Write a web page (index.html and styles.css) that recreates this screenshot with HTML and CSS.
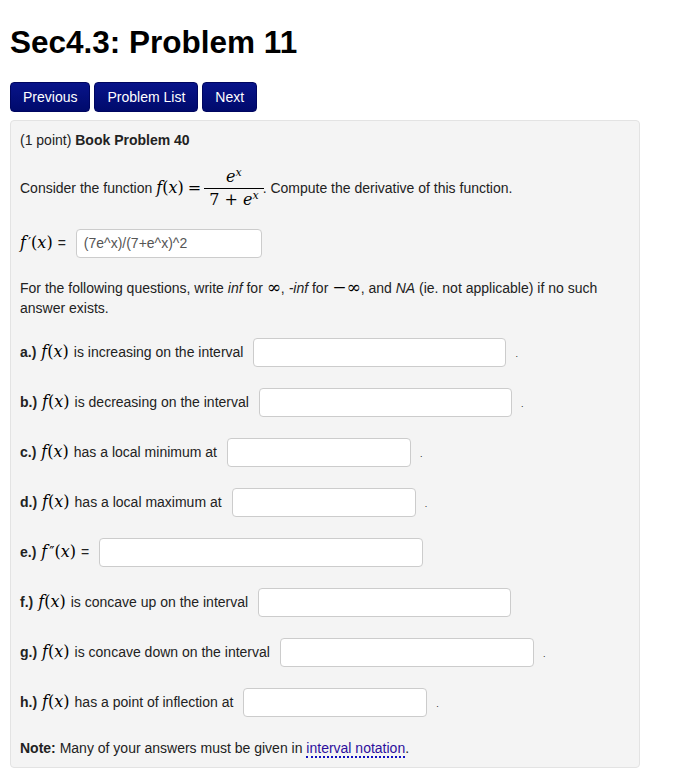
FILE: index.html
```html
<!DOCTYPE html>
<html>
<head>
<meta charset="utf-8">
<link rel="stylesheet" href="styles.css">
</head>
<body>
<h1 class="title">Sec4.3: Problem 11</h1>
<div class="nav">
  <span class="btn">Previous</span>
  <span class="btn">Problem List</span>
  <span class="btn">Next</span>
</div>
<div class="problem">
  <div class="line">(1 point) <b>Book Problem 40</b></div>
  <div class="frac-line">
    <span>Consider the function</span>
    <span class="math fx"><i>f</i>(<i>x</i>)</span>
    <span class="math eq">=</span>
    <span class="frac">
      <span class="num"><i>e</i><sup><i>x</i></sup></span>
      <span class="den">7 + <i>e</i><sup><i>x</i></sup></span>
    </span>
    <span class="after">. Compute the derivative of this function.</span>
  </div>
  <div class="row first-row">
    <span class="math"><i>f</i><span class="prime">′</span>(<i>x</i>)</span><span class="eqs">=</span>
    <span class="input w185 filled">(7e^x)/(7+e^x)^2</span>
  </div>
  <p class="para">For the following questions, write <i>inf</i> for <span class="math inf">∞</span>, <i>-inf</i> for <span class="math inf">−∞</span>, and <i>NA</i> (ie. not applicable) if no such answer exists.</p>
  <div class="row qa">
    <b>a.)</b><span class="math"><i>f</i>(<i>x</i>)</span><span>is increasing on the interval</span><span class="input w253"></span><span class="dot">.</span>
  </div>
  <div class="row q">
    <b>b.)</b><span class="math"><i>f</i>(<i>x</i>)</span><span>is decreasing on the interval</span><span class="input w253"></span><span class="dot">.</span>
  </div>
  <div class="row q">
    <b>c.)</b><span class="math"><i>f</i>(<i>x</i>)</span><span>has a local minimum at</span><span class="input w184"></span><span class="dot">.</span>
  </div>
  <div class="row q">
    <b>d.)</b><span class="math"><i>f</i>(<i>x</i>)</span><span>has a local maximum at</span><span class="input w184"></span><span class="dot">.</span>
  </div>
  <div class="row q">
    <b>e.)</b><span class="math"><i>f</i><span class="prime">″</span>(<i>x</i>)</span><span class="eqs">=</span><span class="input w324"></span>
  </div>
  <div class="row q">
    <b>f.)</b><span class="math"><i>f</i>(<i>x</i>)</span><span>is concave up on the interval</span><span class="input w253"></span>
  </div>
  <div class="row q">
    <b>g.)</b><span class="math"><i>f</i>(<i>x</i>)</span><span>is concave down on the interval</span><span class="input w254"></span><span class="dot">.</span>
  </div>
  <div class="row q">
    <b>h.)</b><span class="math"><i>f</i>(<i>x</i>)</span><span>has a point of inflection at</span><span class="input w184"></span><span class="dot">.</span>
  </div>
  <div class="line note"><b>Note:</b> Many of your answers must be given in <span class="link">interval notation</span>.</div>
</div>
</body>
</html>
```
FILE: styles.css
```css
html, body {
  margin: 0;
  padding: 0;
  background: #ffffff;
}
body {
  padding: 0 10px;
  font-family: "Liberation Sans", Arial, sans-serif;
  font-size: 14px;
  color: #222;
}
.title {
  margin: 0;
  padding-top: 24px;
  font-size: 31.5px;
  line-height: 36px;
  font-weight: bold;
  color: #000;
}
.nav {
  display: flex;
  gap: 4px;
  margin-top: 22px;
}
.btn {
  display: inline-flex;
  align-items: center;
  justify-content: center;
  height: 30px;
  padding: 0 12px;
  box-sizing: border-box;
  color: #fff;
  font-size: 14px;
  border-radius: 4px;
  background: linear-gradient(#08148a, #000a6c);
  border: 1px solid #000660;
}
.problem {
  margin-top: 8px;
  width: 630px;
  box-sizing: border-box;
  background: #f4f4f4;
  border: 1px solid #e3e3e3;
  border-radius: 4px;
  padding: 9px 9px 9px 9px;
}
.line {
  line-height: 20px;
}
.math {
  font-family: "DejaVu Serif", "Liberation Serif", serif;
  font-size: 16px;
  line-height: 20px;
  color: #000;
}
.math i {
  font-style: italic;
}
.prime {
  margin-left: 2px;
  font-size: 14px;
}
.frac-line {
  display: flex;
  align-items: center;
  height: 46px;
  margin-top: 15px;
}
.fx {
  margin-left: 4px;
}
.eq {
  margin: 0 5px 0 4px;
}
.frac {
  display: inline-flex;
  flex-direction: column;
  align-items: center;
  font-family: "DejaVu Serif", "Liberation Serif", serif;
  font-size: 16px;
  color: #000;
  padding: 0 1px;
}
.frac sup {
  font-size: 11px;
  vertical-align: 6px;
  line-height: 0;
}
.num {
  display: block;
  line-height: 21px;
  padding: 0 3px 1px;
  border-bottom: 1px solid #000;
  width: 100%;
  text-align: center;
}
.den {
  display: block;
  line-height: 22px;
  padding: 0 2px;
}
.after {
  margin-left: 1px;
}
.row {
  display: flex;
  align-items: center;
  height: 30px;
  gap: 5px;
}
.first-row {
  margin-top: 17px;
}
.eqs {
  margin: 0;
}
.qa {
  margin-top: 19px;
}
.q {
  margin-top: 20px;
}
.row .input {
  margin-left: 5px;
}
.input {
  display: inline-flex;
  align-items: center;
  height: 29px;
  box-sizing: border-box;
  background: #fff;
  border: 1px solid #cccccc;
  border-radius: 4px;
  padding: 0 7px;
  color: #555;
}
.filled {
  font-size: 14px;
}
.w185 { width: 186px; }
.w184 { width: 184px; }
.w253 { width: 253px; }
.w254 { width: 254px; }
.w324 { width: 324px; }
.dot {
  margin-left: 4px;
  font-size: 9px;
  position: relative;
  top: 2px;
}
.para {
  margin: 20px 0 0;
  line-height: 20px;
}
.inf {
  font-size: 17px;
  line-height: 12px;
}
.note {
  margin-top: 21px;
}
.link {
  color: #2c0f9c;
  border-bottom: 2px dotted #1010c0;
}
```
